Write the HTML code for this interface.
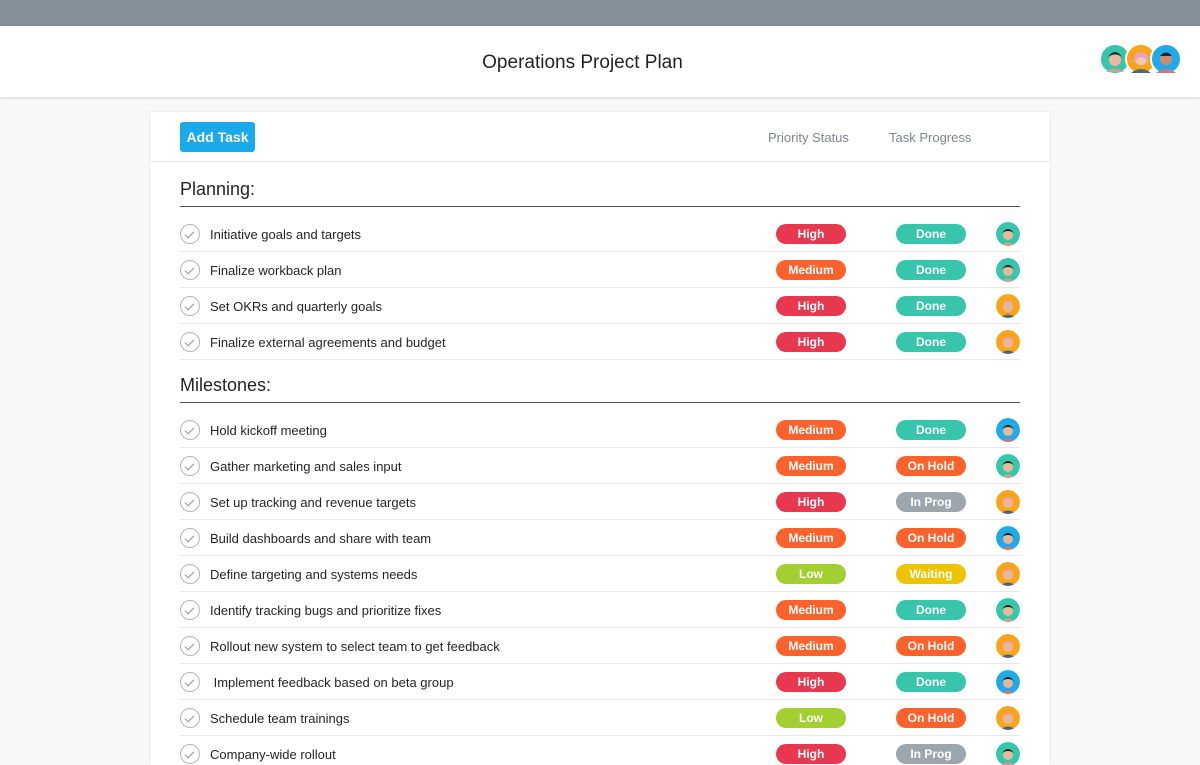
<!DOCTYPE html>
<html><head><meta charset="utf-8"><style>
*{margin:0;padding:0;box-sizing:border-box}
html,body{width:1200px;height:765px;overflow:hidden}
body{background:#f6f8f9;font-family:"Liberation Sans",sans-serif;position:relative}
.top{position:absolute;left:0;top:0;width:1200px;height:26px;background:#848f99}
.hdr{position:absolute;left:0;top:26px;width:1200px;height:71px;background:#fff;box-shadow:0 1px 3px rgba(0,0,0,.15)}
.hdr h1{position:absolute;left:0;width:1165px;text-align:center;top:26px;font-size:19px;font-weight:normal;color:#1f2327}
.card{position:absolute;left:150px;top:112px;width:900px;height:653px;background:#fff;box-shadow:0 0 2px rgba(0,0,0,.12)}
.tb{height:50px;border-bottom:1px solid #e3e7ea;position:relative}
.btn{position:absolute;left:30px;top:10px;width:75px;height:30px;background:#1aa9eb;border-radius:3px;color:#fff;font-size:14px;font-weight:bold;text-align:center;line-height:30px}
.tl{position:absolute;top:18px;font-size:13px;color:#7d868e}
.sec{position:absolute;left:30px;width:840px;font-size:18px;color:#1f2327;border-bottom:1px solid #555;height:28px}
.row{position:absolute;left:30px;width:840px;height:36px;border-bottom:1px solid #e6e9eb}
.chk{position:absolute;left:0;top:8px;width:20px;height:20px;border:1px solid #b0b6bb;border-radius:50%}
.chk:after{content:"";position:absolute;left:6px;top:4px;width:4px;height:8px;border:solid #8a9299;border-width:0 1.5px 1.5px 0;transform:rotate(45deg)}
.nm{position:absolute;left:30px;top:11px;font-size:13px;color:#1f2327}
.pill{position:absolute;top:8px;width:70px;height:20px;border-radius:10px;color:#fff;font-size:12px;font-weight:bold;text-align:center;line-height:20px}
.p1{left:596px}.p2{left:716px}
.ra{position:absolute;left:816px;top:6px;width:24px;height:24px;border-radius:50%;overflow:hidden}
</style></head><body>
<div class="top"></div>
<div class="hdr"><h1>Operations Project Plan</h1>
<svg style="position:absolute;left:1099px;top:17px" width="84" height="32">
<g><circle cx="16" cy="16" r="15" fill="#37c5ab" stroke="#fff" stroke-width="2"/><circle cx="16" cy="17" r="6" fill="#e9b9a0"/><path d="M9 14 Q16 4 23 14 Q16 9 9 14Z" fill="#2a241f"/><path d="M7 29 Q16 22 25 29" fill="#c9a48b"/></g>
<g><circle cx="42" cy="16" r="15" fill="#f8a51c" stroke="#fff" stroke-width="2"/><circle cx="42" cy="16" r="6" fill="#f0c9b0"/><path d="M35 14 Q42 4 49 14 L49 20 Q42 8 35 20Z" fill="#e7a0c6"/><path d="M32 30 Q42 22 52 30" fill="#4c6b7a"/></g>
<g><circle cx="67" cy="16" r="15" fill="#20aaea" stroke="#fff" stroke-width="2"/><circle cx="67" cy="16" r="6" fill="#c98e70"/><path d="M61 13 Q67 6 73 13Z" fill="#2a241f"/><path d="M57 30 Q67 22 77 30" fill="#c97b7b"/></g>
</svg></div>
<div class="card">
<div class="tb"><div class="btn">Add Task</div><div class="tl" style="left:618px">Priority Status</div><div class="tl" style="left:739px">Task Progress</div></div>
</div>
<div id="rows" style="position:absolute;left:150px;top:112px;width:900px"></div>
<script>
var C={High:"#e8384f",Medium:"#fd612c",Low:"#a4cf30",Done:"#37c5ab","On Hold":"#fd612c","In Prog":"#9ca6af",Waiting:"#eec300"};
var A={g:["#37c5ab","#2a241f","#c9a48b"],o:["#f8a51c","#e7a0c6","#4c6b7a"],b:["#20aaea","#2a241f","#c97b7b"]};
var data=[["s","Planning:",66],
["Initiative goals and targets","High","Done","g"],["Finalize workback plan","Medium","Done","g"],["Set OKRs and quarterly goals","High","Done","o"],["Finalize external agreements and budget","High","Done","o"],
["s","Milestones:",262],
["Hold kickoff meeting","Medium","Done","b"],["Gather marketing and sales input","Medium","On Hold","g"],["Set up tracking and revenue targets","High","In Prog","o"],["Build dashboards and share with team","Medium","On Hold","b"],["Define targeting and systems needs","Low","Waiting","o"],["Identify tracking bugs and prioritize fixes","Medium","Done","g"],["Rollout new system to select team to get feedback","Medium","On Hold","o"],["\u00a0Implement feedback based on beta group","High","Done","b"],["Schedule team trainings","Low","On Hold","o"],["Company-wide rollout","High","In Prog","g"]];
var h="",y=0;
data.forEach(function(d){
if(d[0]=="s"){h+='<div class="sec" style="top:'+(d[2]+1)+'px">'+d[1]+'</div>';y=d[2]+38;return;}
var a=A[d[3]];
h+='<div class="row" style="top:'+y+'px"><div class="chk"></div><div class="nm">'+d[0]+'</div><div class="pill p1" style="background:'+C[d[1]]+'">'+d[1]+'</div><div class="pill p2" style="background:'+C[d[2]]+'">'+d[2]+'</div><svg class="ra" viewBox="0 0 24 24"><circle cx="12" cy="12" r="12" fill="'+a[0]+'"/><circle cx="12" cy="13" r="5" fill="#e5b89c"/><path d="M6 11 Q12 3 18 11 Q12 7 6 11Z" fill="'+a[1]+'"/><path d="M4 24 Q12 17 20 24Z" fill="'+a[2]+'"/></svg></div>';
y+=36;});
document.getElementById("rows").innerHTML=h;
</script>
</body></html>
